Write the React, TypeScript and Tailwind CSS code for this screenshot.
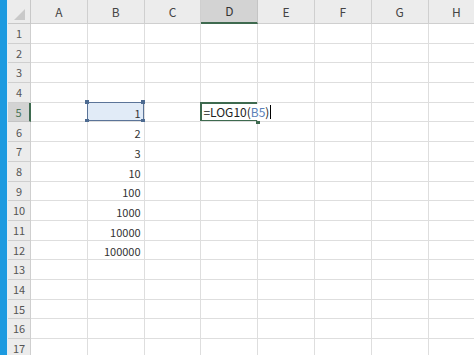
const cols = ["A", "B", "C", "D", "E", "F", "G", "H"];
const rows = Array.from({ length: 17 }, (_, i) => i + 1);

const values: Record<number, string> = {
  5: "1",
  6: "2",
  7: "3",
  8: "10",
  9: "100",
  10: "1000",
  11: "10000",
  12: "100000",
};

function Corner() {
  return (
    <div className="relative h-full border-r border-b border-[#c8c8c8] bg-[#ececec]">
      <svg width="12" height="12" viewBox="0 0 12 12" className="absolute left-[6px] top-[9px]">
        <polygon points="11,0 11,11 0,11" fill="#c9c9c9" />
      </svg>
    </div>
  );
}

function Handle({ className }: { className: string }) {
  return <span className={`absolute h-[4px] w-[4px] bg-[#4d6b91] ${className}`} />;
}

function Cell({ row, col }: { row: number; col: string }) {
  const value = col === "B" ? values[row] : undefined;
  const selected = row === 5 && col === "B";
  const editing = row === 5 && col === "D";

  return (
    <div
      className={`relative border-r border-b border-[#dedede] text-[11px] text-[#333] ${
        selected ? "bg-[#e1ebf7]" : "bg-white"
      }`}
    >
      {value && <span className="absolute right-[3px] bottom-[1px] leading-[14px]">{value}</span>}
      {selected && (
        <div className="absolute -left-[1px] -top-[1px] h-[calc(100%+1px)] w-[calc(100%+1px)] border-[1.5px] border-[#5b7498]">
          <Handle className="-left-[2.5px] -top-[2.5px]" />
          <Handle className="-right-[2.5px] -top-[2.5px]" />
          <Handle className="-left-[2.5px] -bottom-[2.5px]" />
          <Handle className="-right-[2.5px] -bottom-[2.5px]" />
        </div>
      )}
      {editing && (
        <>
          <div className="absolute -left-[1px] -top-[1px] h-[calc(100%+1px)] w-[calc(100%+1px)] border-y-2 border-l-2 border-[#3e6a4f]" />
          <div className="absolute left-[1px] top-[1px] bottom-[1px] z-10 flex w-[72px] items-end bg-white pl-[1px] text-[12px] leading-[16px] text-[#222]">
            <span>=LOG10(</span>
            <span className="text-[#5a7fb8]">B5</span>
            <span>)</span>
            <span className="ml-[1px] mb-[1px] h-[14px] w-[1px] bg-black" />
          </div>
          <span className="absolute -right-[3px] -bottom-[3px] z-10 h-[3px] w-[4px] bg-[#3e6a4f]" />
        </>
      )}
    </div>
  );
}

export default function App() {
  return (
    <div
      className="flex h-[355px] w-[474px] overflow-hidden bg-white"
      style={{ fontFamily: '"Noto Sans CJK JP", "Noto Sans", sans-serif' }}
    >
      <div className="w-[7px] shrink-0 bg-[#1c9ae0]" />
      <div className="w-[1px] shrink-0 bg-[#e4eef6]" />
      <div className="grid grid-cols-[23px_repeat(8,56.8px)] grid-rows-[24px_repeat(17,19.7px)]">
        <Corner />
        {cols.map((c) => (
          <div
            key={c}
            className={`flex items-center justify-center text-[12px] ${
              c === "D"
                ? "border-r border-b-2 border-r-[#c4c4c4] border-b-[#3e6a4f] bg-[#d3d3d3] text-[#333]"
                : "border-r border-b border-[#cfcfcf] bg-[#ececec] text-[#444]"
            }`}
          >
            {c}
          </div>
        ))}
        {rows.map((r) => (
          <div key={r} className="contents">
            <div
              className={`flex items-center justify-center text-[11px] ${
                r === 5
                  ? "border-r-2 border-b border-r-[#3e6a4f] border-b-[#c4c4c4] bg-[#d3d3d3] text-[#4a7358]"
                  : "border-r border-b border-[#cfcfcf] bg-[#ececec] text-[#555]"
              }`}
            >
              {r}
            </div>
            {cols.map((c) => (
              <Cell key={c} row={r} col={c} />
            ))}
          </div>
        ))}
      </div>
    </div>
  );
}
